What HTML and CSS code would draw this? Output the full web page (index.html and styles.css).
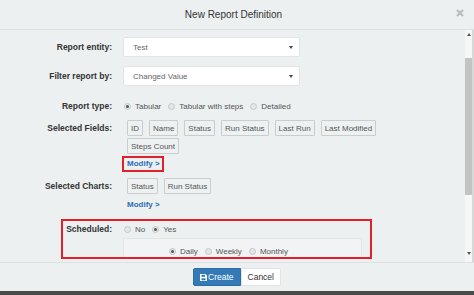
FILE: index.html
```html
<!DOCTYPE html>
<html lang="en">

<head>
  <meta charset="UTF-8">
  <meta name="viewport" content="width=device-width, initial-scale=1.0">
  <title>New Report Definition</title>
  <link rel="stylesheet" href="styles.css">
</head>

<body>
  <div class="modal">
    <div class="modal-header">
      <h4 class="title">New Report Definition</h4>
      <span class="close">
        <svg width="8" height="8" viewBox="0 0 8 8"><path d="M1 1L7 7M7 1L1 7" stroke="#b9bdbf" stroke-width="2.2" /></svg>
      </span>
    </div>

    <div class="modal-body">
      <div class="form">
        <div class="row row-entity">
          <label class="label">Report entity:</label>
          <div class="select">Test<span class="caret"></span></div>
        </div>

        <div class="row row-filter">
          <label class="label">Filter report by:</label>
          <div class="select">Changed Value<span class="caret"></span></div>
        </div>

        <div class="row row-type">
          <label class="label">Report type:</label>
          <div class="radios">
            <span class="radio checked"></span><span class="opt">Tabular</span>
            <span class="radio"></span><span class="opt">Tabular with steps</span>
            <span class="radio"></span><span class="opt">Detailed</span>
          </div>
        </div>

        <div class="row row-fields top">
          <label class="label">Selected Fields:</label>
          <div>
            <div class="tags">
              <span class="tag">ID</span>
              <span class="tag">Name</span>
              <span class="tag">Status</span>
              <span class="tag">Run Status</span>
              <span class="tag">Last Run</span>
              <span class="tag">Last Modified</span>
              <span class="tag">Steps Count</span>
            </div>
            <a class="modify marked">Modify &gt;</a>
          </div>
        </div>

        <div class="row row-charts top">
          <label class="label">Selected Charts:</label>
          <div>
            <div class="tags">
              <span class="tag">Status</span>
              <span class="tag">Run Status</span>
            </div>
            <a class="modify">Modify &gt;</a>
          </div>
        </div>

        <div class="schedule">
          <div class="row row-sched">
            <label class="label">Scheduled:</label>
            <div class="radios">
              <span class="radio"></span><span class="opt">No</span>
              <span class="radio checked"></span><span class="opt">Yes</span>
            </div>
          </div>
          <div class="freq">
            <div class="radios">
              <span class="radio checked"></span><span class="opt">Daily</span>
              <span class="radio"></span><span class="opt">Weekly</span>
              <span class="radio"></span><span class="opt">Monthly</span>
            </div>
          </div>
        </div>
      </div>

      <div class="scrollbar">
        <span class="arrow up"></span>
        <span class="thumb"></span>
        <span class="arrow down"></span>
      </div>
    </div>

    <div class="modal-footer">
      <button class="btn btn-primary">
        <svg width="7" height="7" viewBox="0 0 7 7"><path d="M0 0H5.5L7 1.5V7H0Z" fill="#fff" /><rect x="1.5" y="0.8" width="3.5" height="2" fill="#337ab7" /><rect x="1.5" y="4.3" width="4" height="2" fill="#337ab7" /></svg>Create
      </button>
      <button class="btn btn-default">Cancel</button>
    </div>
    <div class="edge"></div>
  </div>
</body>

</html>
```

FILE: styles.css
```css
body {
  margin: 0px;
  font-family: "Liberation Sans", Arial, sans-serif;
  font-size: 8px;
  color: #555;
}

.modal {
  width: 474px;
  height: 295px;
  display: flex;
  flex-direction: column;
  background: #ecf0f1;
}

.modal-header {
  height: 29px;
  border-bottom: 1px solid #dde1e3;
  display: flex;
  align-items: center;
  padding: 0 10px 0 11px;
}

.title {
  flex: 1;
  margin: 0;
  text-align: center;
  font-size: 10px;
  font-weight: normal;
  color: #333;
}

.close {
  width: 8px;
  height: 8px;
  display: flex;
  margin-top: -4px;
}

.modal-body {
  height: 232px;
  display: flex;
  overflow: hidden;
}

.form {
  flex: 1;
  padding-top: 7px;
}

.row {
  display: grid;
  grid-template-columns: 112px 1fr;
  column-gap: 11px;
  align-items: center;
}

.row.top {
  align-items: start;
}

.label {
  text-align: right;
  font-weight: bold;
  font-size: 8.5px;
  color: #333;
  line-height: 16px;
}

.select {
  width: 177px;
  height: 20px;
  box-sizing: border-box;
  background: #fff;
  border: 1px solid #e1e4e5;
  border-radius: 2px;
  padding: 0 9px;
  display: flex;
  align-items: center;
  justify-content: space-between;
  color: #666;
}

.caret {
  width: 0;
  height: 0;
  border-left: 2px solid transparent;
  border-right: 2px solid transparent;
  border-top: 3px solid #444;
  margin-right: -3px;
}

.row-filter {
  margin-top: 9px;
}

.row-type {
  margin-top: 12px;
  height: 14px;
}

.radios {
  display: flex;
  align-items: center;
  padding-left: 1px;
}

.radio {
  width: 5px;
  height: 5px;
  border: 1px solid #c4c8ca;
  border-radius: 50%;
  background: #e4e7e8;
  margin-right: 4px;
  display: flex;
  align-items: center;
  justify-content: center;
}

.radio.checked::after {
  content: "";
  width: 3px;
  height: 3px;
  border-radius: 50%;
  background: #555;
}

.opt {
  margin-right: 7px;
}

.row-fields {
  margin-top: 8px;
}

.tags {
  display: flex;
  flex-wrap: wrap;
  gap: 2px 6px;
  width: 260px;
  padding-left: 4px;
}

.tag {
  height: 16px;
  box-sizing: border-box;
  padding: 0 3px;
  border: 1px solid #c9cdcf;
  border-radius: 1px;
  background: #eef1f2;
  display: flex;
  align-items: center;
  color: #555;
}

.modify {
  display: inline-block;
  height: 16px;
  line-height: 16px;
  margin-top: 3px;
  padding-left: 4px;
  font-weight: bold;
  color: #2d6db2;
}

.modify.marked {
  box-sizing: border-box;
  width: 42px;
  line-height: 12px;
  margin-top: 2px;
  margin-left: -1px;
  padding-left: 3px;
  border: 2px solid #e0202a;
}

.row-charts {
  margin-top: 6px;
}

.schedule {
  margin-top: 6px;
  margin-left: 61px;
  width: 311px;
  height: 40px;
  box-sizing: border-box;
  border: 2px solid #e0202a;
  overflow: hidden;
}

.row-sched {
  grid-template-columns: 49px 1fr;
  height: 14px;
}

.freq {
  margin: 3px 8px 0 60px;
  height: 30px;
  background: #f1f3f4;
  border: 1px solid #e2e5e6;
  padding: 5px 0 0 44px;
}

.freq .radios {
  height: 14px;
}

.scrollbar {
  width: 7px;
  border-right: 2px solid #d6d8d9;
  background: #f5f6f6;
  display: flex;
  flex-direction: column;
  align-items: center;
}

.arrow {
  width: 0;
  height: 0;
  border-left: 2px solid transparent;
  border-right: 2px solid transparent;
}

.arrow.up {
  border-bottom: 3px solid #555;
  margin-top: 3px;
}

.arrow.down {
  border-top: 3px solid #555;
  margin-top: 57px;
}

.thumb {
  width: 7px;
  height: 137px;
  margin-top: 22px;
  background: #c3c3c3;
}

.modal-footer {
  height: 28px;
  border-top: 1px solid #dde1e3;
  display: flex;
  align-items: center;
  justify-content: center;
}

.btn {
  height: 18px;
  font-family: inherit;
  font-size: 8.5px;
  padding: 0 6px;
  border-radius: 2px;
  display: flex;
  align-items: center;
  gap: 1px;
}

.btn-primary {
  background: #337ab7;
  border: 1px solid #2e6da4;
  color: #fff;
  border-radius: 2px 0 0 2px;
}

.btn-default {
  background: #fff;
  border: 1px solid #e1e4e5;
  color: #333;
  border-radius: 0 2px 2px 0;
}

.edge {
  height: 4px;
  background: #4a4a4a;
}
```
